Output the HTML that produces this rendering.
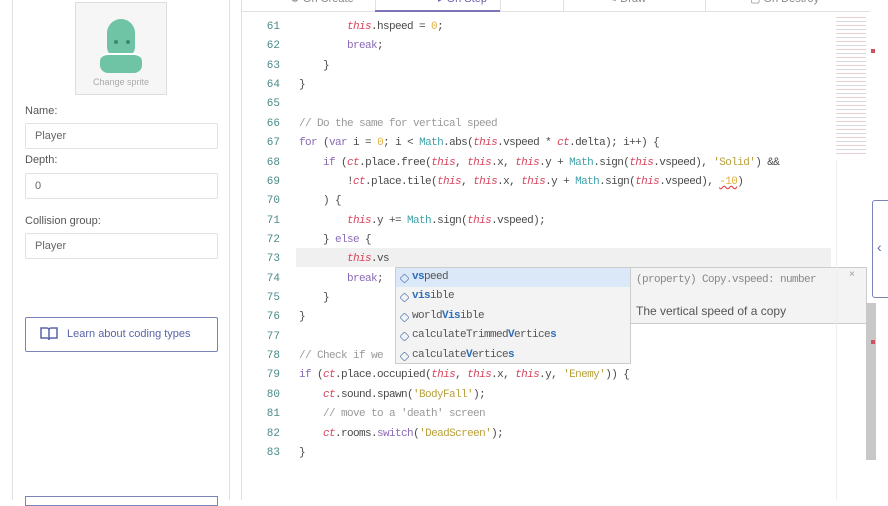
<!DOCTYPE html>
<html><head><meta charset="utf-8"><style>
*{box-sizing:border-box;margin:0;padding:0}
body{width:888px;height:500px;overflow:hidden;background:#fff;font-family:"Liberation Sans",sans-serif;position:relative;color:#555}
.abs{position:absolute}
.lbl{position:absolute;left:25px;font-size:11px;color:#555}
.inp{position:absolute;left:25px;width:193px;height:26px;border:1px solid #e2e2e6;border-radius:2px;font-size:11px;color:#666;padding:6px 0 0 9px}
.code{position:absolute;left:242px;top:18px;font-family:"Liberation Mono",monospace;font-size:11px;letter-spacing:-0.6px;line-height:19.36px;white-space:pre;color:#4a4a4a}
.ln{display:inline-block;width:38px;text-align:right;color:#4a8a8a;margin-right:19px;letter-spacing:0}
.k{color:#8b6bb5}.t{color:#d9445e;font-style:italic}.m{color:#3fa2a8}.n{color:#e0b040}.s{color:#b8a03c}.c{color:#999}
.ac{position:absolute;left:395px;top:267px;width:236px;height:97px;background:#f3f3f3;border:1px solid #ccc;font-family:"Liberation Mono",monospace;font-size:11px;letter-spacing:-0.6px;color:#555}
.ac div{height:19.4px;line-height:19.4px;padding-left:16px;position:relative}
.ac div:before{content:"";position:absolute;left:4px;top:6px;width:7px;height:7px;border:1px solid #6a8ab8;border-radius:2px;transform:rotate(45deg) scale(.8)}
.ac b{color:#2e6fb8}
</style></head><body>
<div class="abs" style="left:12px;top:0;width:218px;height:500px;border-left:1px solid #e0e0e6;border-right:1px solid #e0e0e6"></div>
<div class="abs" style="left:75px;top:2px;width:92px;height:93px;border:1px solid #ddd;background:#f6f6f6"></div>
<div class="abs" style="left:107px;top:19px;width:28px;height:38px;border-radius:14px 14px 10px 10px;background:#6ec4a4"></div>
<div class="abs" style="left:100px;top:53px;width:42px;height:20px;border-radius:8px;background:#6ec4a4;border-top:2px solid #fff"></div>
<div class="abs" style="left:114px;top:40px;width:4px;height:4px;border-radius:2px;background:#3e8a70"></div>
<div class="abs" style="left:126px;top:40px;width:4px;height:4px;border-radius:2px;background:#3e8a70"></div>
<div class="abs" style="left:75px;top:77px;width:92px;text-align:center;font-size:9px;color:#aaa">Change sprite</div>
<div class="lbl" style="top:105px">Name:</div>
<div class="inp" style="top:123px">Player</div>
<div class="lbl" style="top:154px">Depth:</div>
<div class="inp" style="top:173px">0</div>
<div class="lbl" style="top:215px">Collision group:</div>
<div class="inp" style="top:233px">Player</div>
<div class="abs" style="left:25px;top:317px;width:193px;height:35px;border:1px solid #7b84b8;border-radius:2px;font-size:11px;color:#5a64a8;padding:10px 0 0 41px">Learn about coding types</div>
<svg class="abs" style="left:40px;top:326px" width="18" height="16" viewBox="0 0 18 16"><path d="M1 2h6a2 2 0 0 1 2 2v10a2 2 0 0 0-2-2H1zM17 2h-6a2 2 0 0 0-2 2v10a2 2 0 0 1 2-2h6z" fill="none" stroke="#5a64a8" stroke-width="1.5"/></svg>
<div class="abs" style="left:25px;top:496px;width:193px;height:10px;border:1px solid #7b84b8"></div>
<div class="abs" style="left:241px;top:0;width:1px;height:500px;background:#e0e0e6"></div>
<div class="abs" style="left:242px;top:0;width:628px;height:12px;border-bottom:1px solid #e0e0e6"></div>
<div class="abs" style="left:290px;top:-8px;font-size:11px;color:#888">⚙ On Create</div>
<div class="abs" style="left:375px;top:0;width:1px;height:12px;background:#e0e0e6"></div>
<div class="abs" style="left:438px;top:-8px;font-size:11px;color:#6a62b0">▸ On Step</div>
<div class="abs" style="left:375px;top:10px;width:126px;height:2px;background:#7b74b8"></div>
<div class="abs" style="left:500px;top:0;width:1px;height:12px;background:#e0e0e6"></div>
<div class="abs" style="left:563px;top:0;width:1px;height:12px;background:#e0e0e6"></div>
<div class="abs" style="left:608px;top:-8px;font-size:11px;color:#888">✎ Draw</div>
<div class="abs" style="left:705px;top:0;width:1px;height:12px;background:#e0e0e6"></div>
<div class="abs" style="left:750px;top:-8px;font-size:11px;color:#888">▢ On Destroy</div>
<div class="abs" style="left:296px;top:248px;width:535px;height:19px;background:#f0f0f0"></div>
<div class="code"><span class="ln">61</span>        <span class="t">this</span>.hspeed = <span class="n">0</span>;
<span class="ln">62</span>        <span class="k">break</span>;
<span class="ln">63</span>    }
<span class="ln">64</span>}
<span class="ln">65</span>
<span class="ln">66</span><span class="c">// Do the same for vertical speed</span>
<span class="ln">67</span><span class="k">for</span> (<span class="k">var</span> i = <span class="n">0</span>; i &lt; <span class="m">Math</span>.abs(<span class="t">this</span>.vspeed * <span class="t">ct</span>.delta); i++) {
<span class="ln">68</span>    <span class="k">if</span> (<span class="t">ct</span>.place.free(<span class="t">this</span>, <span class="t">this</span>.x, <span class="t">this</span>.y + <span class="m">Math</span>.sign(<span class="t">this</span>.vspeed), <span class="s">'Solid'</span>) &amp;&amp;
<span class="ln">69</span>        !<span class="t">ct</span>.place.tile(<span class="t">this</span>, <span class="t">this</span>.x, <span class="t">this</span>.y + <span class="m">Math</span>.sign(<span class="t">this</span>.vspeed), <span class="n" style="text-decoration:underline wavy #d44">-10</span>)
<span class="ln">70</span>    ) {
<span class="ln">71</span>        <span class="t">this</span>.y += <span class="m">Math</span>.sign(<span class="t">this</span>.vspeed);
<span class="ln">72</span>    } <span class="k">else</span> {
<span class="ln">73</span>        <span class="t">this</span>.vs
<span class="ln">74</span>        <span class="k">break</span>;
<span class="ln">75</span>    }
<span class="ln">76</span>}
<span class="ln">77</span>
<span class="ln">78</span><span class="c">// Check if we</span>
<span class="ln">79</span><span class="k">if</span> (<span class="t">ct</span>.place.occupied(<span class="t">this</span>, <span class="t">this</span>.x, <span class="t">this</span>.y, <span class="s">'Enemy'</span>)) {
<span class="ln">80</span>    <span class="t">ct</span>.sound.spawn(<span class="s">'BodyFall'</span>);
<span class="ln">81</span>    <span class="c">// move to a 'death' screen</span>
<span class="ln">82</span>    <span class="t">ct</span>.rooms.<span class="k">switch</span>(<span class="s">'DeadScreen'</span>);
<span class="ln">83</span>}</div>
<div class="ac">
<div style="background:#dbe8f8"><b>vs</b>peed</div>
<div><b>vis</b>ible</div>
<div>world<b>Vis</b>ible</div>
<div>calculateTrimmed<b>V</b>ertice<b>s</b></div>
<div>calculate<b>V</b>ertice<b>s</b></div>
</div>
<div class="abs" style="left:630px;top:267px;width:237px;height:57px;background:#f3f3f3;border:1px solid #ccc">
<div class="abs" style="left:5px;top:6px;font-family:'Liberation Mono',monospace;font-size:11px;letter-spacing:-0.6px;color:#888">(property) Copy.vspeed: number</div>
<div class="abs" style="left:218px;top:1px;font-size:10px;color:#999">×</div>
<div class="abs" style="left:5px;top:36px;font-size:12px;color:#555">The vertical speed of a copy</div>
</div>
<div class="abs" style="left:836px;top:14px;width:30px;height:140px;background:repeating-linear-gradient(#fff 0 3px,#eccfd3 3px 4px,#fff 4px 7px,#d8d8e0 7px 8px)"></div>
<div class="abs" style="left:836px;top:160px;width:30px;height:340px;border-left:1px solid #eee"></div>
<div class="abs" style="left:866px;top:303px;width:10px;height:157px;background:#c8c8c8"></div>
<div class="abs" style="left:871px;top:49px;width:4px;height:4px;background:#d05060"></div>
<div class="abs" style="left:871px;top:340px;width:4px;height:4px;background:#d05060"></div>
<div class="abs" style="left:872px;top:200px;width:20px;height:98px;border:1px solid #7b84b8;background:#fff;border-radius:3px 0 0 3px;color:#5a64a8;font-size:14px;padding:38px 0 0 4px">‹</div>
</body></html>
